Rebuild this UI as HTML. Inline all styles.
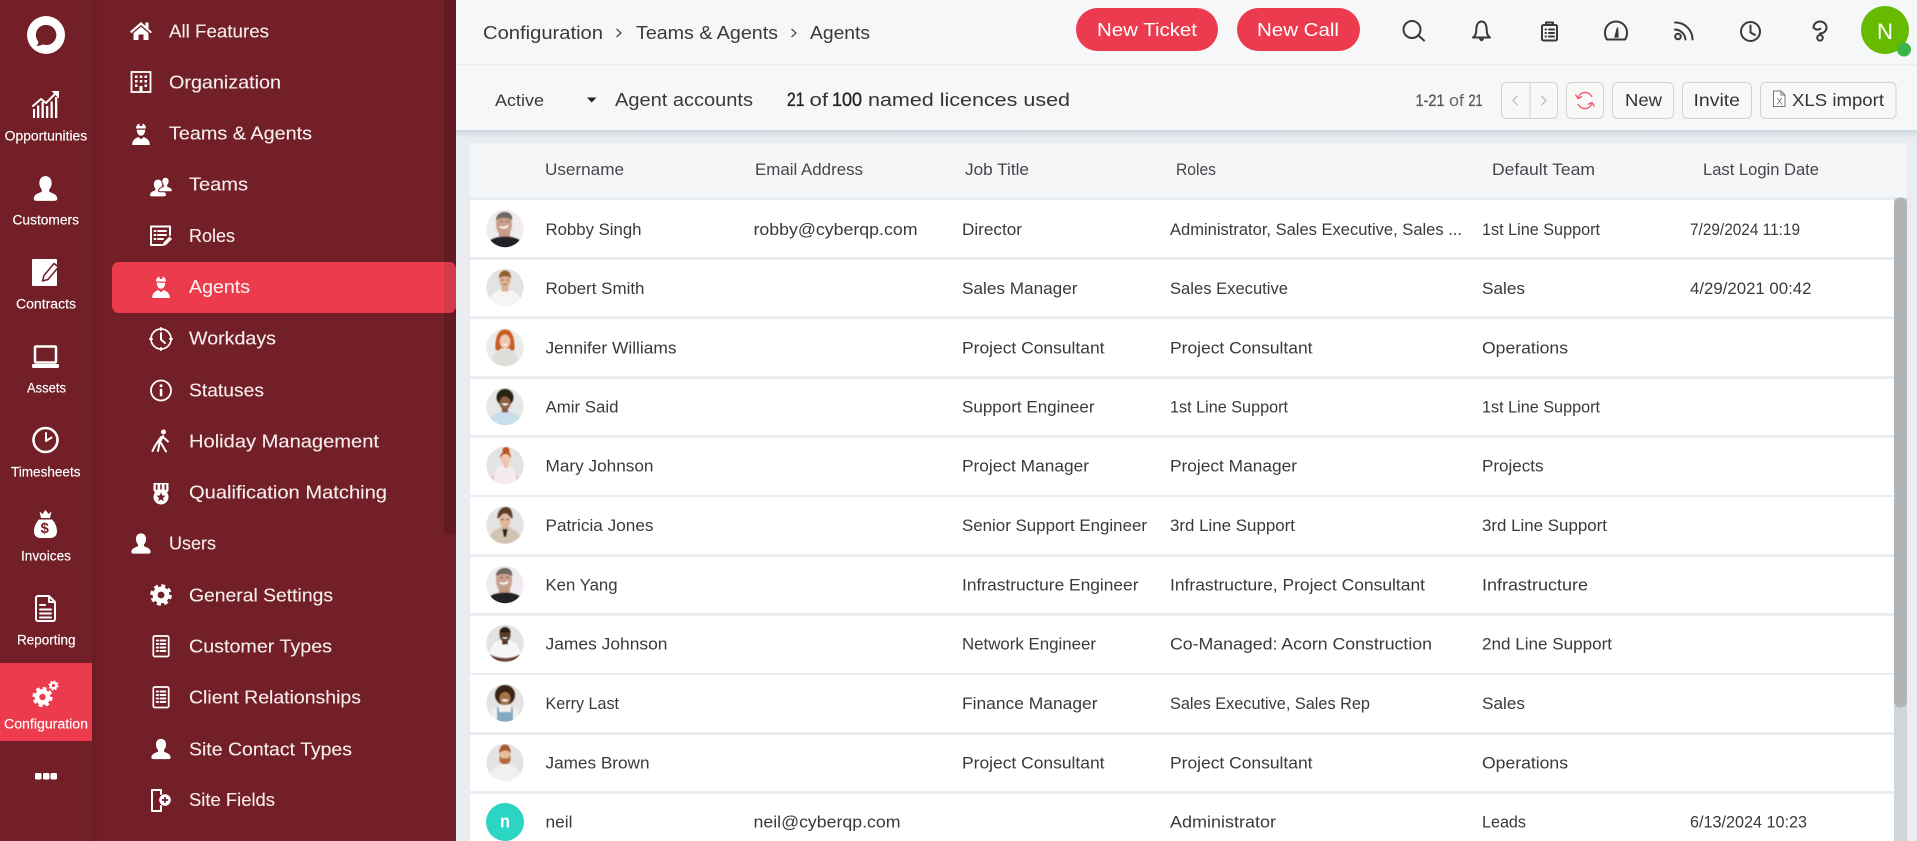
<!DOCTYPE html>
<html lang="en"><head><meta charset="utf-8"><title>Agents</title>
<style>
html,body{margin:0;padding:0;background:#e9edf2;overflow:hidden}
svg{display:block}
text{font-family:"Liberation Sans",Arial,sans-serif}
.a{font-size:13.5px;fill:#fff;stroke:#fff;stroke-width:.15}
.b{font-size:18.4px;fill:#f6eeee;stroke:#f6eeee;stroke-width:.1}
.c{font-size:18.2px;fill:#3a3a3c}
.d{font-size:16.4px;fill:#3a3a3c}
.e{font-size:16.2px;fill:#46464a}
.f{font-size:18.6px;fill:#fff}
.g{font-size:17.6px;fill:#333}
.w{fill:#fff}
.l{fill:none;stroke:#fff;stroke-width:2;stroke-linecap:round;stroke-linejoin:round}
.h{fill:none;stroke:#38393b;stroke-width:2;stroke-linecap:round;stroke-linejoin:round}
.r{fill:#fff}
.bt{fill:#f8f8f9;stroke:#d2d3d5;stroke-width:1}
</style></head>
<body>
<svg xmlns="http://www.w3.org/2000/svg" width="1917" height="841" viewBox="0 0 1917 841">
<defs>
<linearGradient id="sh" x1="0" x2="1"><stop offset="0" stop-color="#5e1820" stop-opacity=".55"/><stop offset="1" stop-color="#721f27" stop-opacity="0"/></linearGradient>
<linearGradient id="ts" x1="0" x2="0" y1="0" y2="1"><stop offset="0" stop-color="#cfd7e0"/><stop offset="1" stop-color="#e9edf2"/></linearGradient>
<clipPath id="c"><circle r="18.7"/></clipPath>
<filter id="bl" x="-20%" y="-20%" width="140%" height="140%"><feGaussianBlur stdDeviation=".45"/></filter>
<g id="person"><path class="w" d="M0-11C3.800-11 5.500-8 5.500-4.800 5.500-2.300 4.300-.3 3.300 1V2.800C5.500 4.300 10.500 4.800 10.500 9.200 10.500 10.300 9.600 11 8 11H-8C-9.600 11-10.500 10.300-10.500 9.200-10.500 4.800-5.500 4.300-3.300 2.800V1C-4.300-.3-5.500-2.300-5.500-4.800-5.500-8-3.800-11 0-11Z"/></g>
<g id="agent"><path class="w" d="M-5-5.500A5 5.500 0 0 1-1.500-10.500V-8H1.500V-10.500A5 5.500 0 0 1 5-5.500Z"/><path class="w" d="M-4.200-4.300H4.200C4.200-.6 2.200 1.700 0 1.700-2.200 1.700-4.200-.6-4.200-4.300Z"/><path class="w" d="M-8.800 11C-8.800 6-6.200 4.800-2.800 3L0 5.300 2.800 3C6.200 4.800 8.800 6 8.800 11Z"/></g>
<g id="gear"><circle r="6" fill="none" stroke="#fff" stroke-width="5"/><circle r="9.400" fill="none" stroke="#fff" stroke-width="3.200" stroke-dasharray="4 3.380"/></g>
<g id="list"><rect x="-7.700" y="-10" width="15.400" height="20.500" rx="1.500" fill="none" stroke="#fff" stroke-width="1.700"/><path class="l" stroke-width="1.600" d="M-4.200-5.500H-3M-.5-5.500H4.300M-4.200-2H-3M-.5-2H4.300M-4.200 1.500H-3M-.5 1.500H4.300M-4.200 5H-3M-.5 5H4.300"/></g>
<g id="a1" clip-path="url(#c)"><circle r="19" fill="#efebf0"/><g filter="url(#bl)"><ellipse cx="-1" cy="-4" rx="8" ry="11.500" fill="#c9a08c"/><rect x="-6" y="3" width="11" height="7" fill="#c29a86"/><path d="M-9-8C-9-15-3-16.500 0-16.500 5-16.500 8-13 7-8 5-11-5-12-9-8Z" fill="#6e6763"/><path d="M-5-2Q-1 1 3-3" stroke="#fff" stroke-width="1.600" fill="none"/><path d="M-5-7H-2M1-7H4" stroke="#6b5448" stroke-width="1.100"/><ellipse cy="18" rx="19" ry="10" fill="#232126"/></g></g>
<g id="a2" clip-path="url(#c)"><circle r="19" fill="#e3e3e3"/><g filter="url(#bl)"><path d="M-17 19C-17 8-8 3-4 2H4C8 3 17 8 17 19Z" fill="#f6f5f4"/><rect x="-3.500" y="-2" width="7" height="6" fill="#dcb095"/><ellipse cy="-8" rx="5.800" ry="8" fill="#deb397"/><path d="M-6-9C-6-15-3-17 0-17 4-17 6-14 6-9 3-12-3-12-6-9Z" fill="#92602e"/><path d="M-4-7.500H-1M1-7.500H4" stroke="#a87238" stroke-width="1.200"/><path d="M-2.500-3H2.500" stroke="#a57a5c" stroke-width="1.200"/></g></g>
<g id="a3" clip-path="url(#c)"><circle r="19" fill="#ebebe9"/><g filter="url(#bl)"><path d="M-14 19C-15 9-9 4-4 2H4C9 4 15 9 14 19Z" fill="#dfddd9"/><path d="M-9.500 2C-10-12-6-18 0-18 6-18 10-12 9.500 2 7 4 5 3 5 1L-5 1C-5 3-7 4-9.500 2Z" fill="#c95b22"/><ellipse cy="-6" rx="5.300" ry="7" fill="#f0c7ae"/><path d="M-3-3.500Q0-.5 3-3.500Z" fill="#fff"/></g></g>
<g id="a4" clip-path="url(#c)"><circle r="19" fill="#e6e7e7"/><g filter="url(#bl)"><path d="M-17 19C-17 10-9 6-4 5H4C9 6 17 10 17 19Z" fill="#c8deec"/><circle cy="-9" r="8.500" fill="#2a2019"/><rect x="-3" y="-1" width="6" height="7" fill="#84583c"/><ellipse cy="-3.500" rx="5.500" ry="6.500" fill="#8c6042"/><path d="M-3.500-3Q0 1 3.500-3Z" fill="#fff"/></g></g>
<g id="a5" clip-path="url(#c)"><circle r="19" fill="#e3e3e3"/><g filter="url(#bl)"><path d="M-17 19L-12 9-10 19ZM17 19L12 9 10 19Z" fill="#e8c4ae"/><path d="M-11 19C-12 7-8 1-4 0H4C8 1 12 7 11 19Z" fill="#f4ecee"/><circle cx="1" cy="-15" r="3.500" fill="#c0501f"/><path d="M-5-7C-5-13-1-14 1-14 4-14 6-12 6-7L4-10H-3Z" fill="#c0501f"/><rect x="-1.500" y="-3" width="5" height="5" fill="#eec0a8"/><ellipse cx=".5" cy="-6" rx="4.800" ry="5.500" fill="#f2c6ae"/></g></g>
<g id="a6" clip-path="url(#c)"><circle r="19" fill="#e4e4e4"/><g filter="url(#bl)"><path d="M-17 19C-17 9-9 4-4 2H4C9 4 17 9 17 19Z" fill="#d2c3b3"/><path d="M-3 3H3L1 12H-1Z" fill="#26201e"/><path d="M-7.500-6C-8-14-3-18 1-18 5-18 8-14 7.500-6L4-9H-4Z" fill="#5c3c2a"/><ellipse cy="-4.500" rx="5.500" ry="7" fill="#e2b79c"/><rect x="-3" y="0" width="6" height="4" fill="#dcae92"/><path d="M-4.500-5.500H-1M1-5.500H4.500" stroke="#4a3a30" stroke-width="1.100"/></g></g>
<g id="a8" clip-path="url(#c)"><circle r="19" fill="#e3e3e3"/><g filter="url(#bl)"><path d="M-16 9L-11-1-5-3H5L11-1 16 9 13 15-13 15Z" fill="#f6f6f6"/><path d="M-15 11Q0 18 15 11L15 15Q0 21-15 15Z" fill="#6b4532"/><rect x="-3" y="-5" width="6" height="6" fill="#4c3223"/><ellipse cy="-9" rx="5.500" ry="7.500" fill="#5a3a28"/><path d="M-5.500-11C-5.500-18 5.500-18 5.500-11Z" fill="#2c1d14"/><path d="M-3-6Q0-3.500 3-6Z" fill="#fff"/></g></g>
<g id="a9" clip-path="url(#c)"><circle r="19" fill="#e3e3e3"/><g filter="url(#bl)"><path d="M-15 17L-13 6-4 2H4L13 6 15 17Z" fill="#f2f0ed"/><path d="M-8 19V4H-6V9H6V4H8V19Z" fill="#84a8bf"/><circle cy="-8" r="10" fill="#3a2414"/><ellipse cy="-4.500" rx="5.500" ry="6.500" fill="#a8744c"/><path d="M-3.500-3.500Q0 .5 3.500-3.500Z" fill="#fff"/></g></g>
<g id="a10" clip-path="url(#c)"><circle r="19" fill="#e4e4e4"/><g filter="url(#bl)"><path d="M-18 19C-16 8-8 3-4 2H4C8 3 16 8 18 19Z" fill="#f1f0ef"/><ellipse cy="-8" rx="5.500" ry="7" fill="#e4bea0"/><path d="M-5.500-7V-3C-5.500 1-2 1.500 0 1.500 2 1.500 5.500 1-3-3 5.500-7 3-4-3-4Z" fill="#b8683a"/><path d="M-5.700-9C-6-15-3-18 0-18 3-18 6-15 5.700-9 3-13-3-13-5.700-9Z" fill="#a85a2e"/><path d="M-5.500-7V-3C-5.500 1-2 1.500 0 1.500 2 1.500 5.500 1 5.500-3V-7L3-4H-3Z" fill="#b8683a"/></g></g>
</defs>

<!-- page -->
<rect width="1917" height="841" fill="#e9edf2"/>
<rect x="456" y="0" width="1461" height="130" fill="#f6f7f9"/>
<rect x="456" y="64" width="1461" height="1.500" fill="#e9ecf0"/>
<rect x="456" y="130" width="1461" height="8" fill="url(#ts)"/>

<!-- sidebars -->
<rect width="456" height="841" fill="#721f27"/>
<rect x="92" width="10" height="841" fill="url(#sh)"/>
<rect x="444" width="12" height="534" fill="#641a22"/>
<rect x="112" y="262" width="344" height="51" rx="7" fill="#ec3b4c"/>
<path d="M444 262H449A7 7 0 0 1 456 269V306A7 7 0 0 1 449 313H444Z" fill="#d43a48"/>
<rect y="663" width="92" height="78" fill="#ec3b4c"/>

<!-- logo -->
<circle cx="46" cy="35" r="19" fill="#fff"/>
<path d="M47 25A10 10 0 1 1 43 44.400C41 45.400 38.500 46 36.500 45.800 37.800 44.700 38.300 43.300 38.300 41.500A10 10 0 0 1 47 25Z" fill="#721f27"/>

<!-- rail icons -->
<path class="w" d="M33 109h2v9h-2zM37 105.500h2.300V118H37zM41.500 102h2.300v16h-2.300zM46 106h2.300v12H46zM50.500 101.500h2.300V118h-2.300zM55 97h2.300v21H55z"/>
<path class="l" stroke-width="1.800" d="M33 106L41 99 46 103 55 94"/><path class="w" d="M51.500 91H59V98.500Z"/>
<use href="#person" transform="translate(45.500 188.500) scale(1.120)"/>
<rect x="32" y="259" width="25" height="27" rx="1" fill="#fff"/>
<path d="M42.500 281L44 275.500 54 263.500 58.500 267 48 279.500Z" fill="#fff" stroke="#721f27" stroke-width="1.500" stroke-linejoin="round"/>
<rect x="35" y="346.500" width="21" height="16" rx="1" fill="none" stroke="#fff" stroke-width="2.500"/><rect x="32" y="364" width="27" height="4" rx="1.500" class="w"/>
<circle cx="45.500" cy="440" r="12" fill="none" stroke="#fff" stroke-width="2.600"/><path class="l" stroke-width="2.300" d="M46 433V441L51.500 437.500"/>
<path class="w" d="M39.500 511.500L42.500 514 45.500 510 48.500 514 51.500 511.500 50 518H41ZM39 519.500H52C57 524 61 538 50 538H41C30 538 34 524 39 519.500Z"/>
<text x="40.500" y="533" font-size="15" font-weight="bold" fill="#721f27">$</text>
<path class="l" stroke-width="2.200" d="M49 596H38A2 2 0 0 0 36 598V619A2 2 0 0 0 38 621H53A2 2 0 0 0 55 619V602ZM49 596V602H55"/><path class="l" stroke-width="1.700" d="M40 605H45M40 609.500H51M40 613.500H51M40 617.500H51"/>
<use href="#gear" transform="translate(42.500 697) scale(.92)"/>
<use href="#gear" transform="translate(53.500 685.500) scale(.46)"/>
<rect x="35" y="773" width="6.500" height="6.500" rx="1.500" class="w"/><rect x="43" y="773" width="6.500" height="6.500" rx="1.500" class="w"/><rect x="50.500" y="773" width="6.500" height="6.500" rx="1.500" class="w"/>

<!-- rail labels -->
<text class="a" x="4.700" y="140.500" textLength="82.500" lengthAdjust="spacingAndGlyphs">Opportunities</text>
<text class="a" x="12.500" y="224.500" textLength="66.500" lengthAdjust="spacingAndGlyphs">Customers</text>
<text class="a" x="16" y="308.500" textLength="60" lengthAdjust="spacingAndGlyphs">Contracts</text>
<text class="a" x="27" y="392.500" textLength="39" lengthAdjust="spacingAndGlyphs">Assets</text>
<text class="a" x="11" y="476.500" textLength="69.500" lengthAdjust="spacingAndGlyphs">Timesheets</text>
<text class="a" x="21" y="560.500" textLength="50" lengthAdjust="spacingAndGlyphs">Invoices</text>
<text class="a" x="17" y="644.500" textLength="58.500" lengthAdjust="spacingAndGlyphs">Reporting</text>
<text class="a" x="4" y="728.500" textLength="84" lengthAdjust="spacingAndGlyphs">Configuration</text>

<!-- panel icons -->
<path class="w" d="M130 31.500L141 22 145.500 26V22.500H148.500V29L152 32 150.800 33.200 141 25 131.300 33.200ZM133.500 33L141 26.800 148.500 33V40H143.500V34.500H138.500V40H133.500Z"/>
<rect x="131.500" y="72" width="19" height="20" fill="none" stroke="#fff" stroke-width="1.800"/><path d="M135 75.500h2.500v2.500H135zM139.800 75.500h2.500v2.500h-2.500zM144.500 75.500h2.500v2.500h-2.500zM135 80h2.500v2.500H135zM139.800 80h2.500v2.500h-2.500zM144.500 80h2.500v2.500h-2.500zM135 84.500h2.500V87H135zM144.500 84.500h2.500V87h-2.500zM139.500 86h3v5h-3z" class="w"/>
<use href="#agent" x="141" y="134"/>
<use href="#person" transform="translate(158 188) scale(.76)"/><g transform="translate(165.500 184.500) scale(.66)"><path class="w" stroke="#721f27" stroke-width="1.500" d="M0-11C3.800-11 5.500-8 5.500-4.800 5.500-2.300 4.300-.3 3.300 1V2.800C5.500 4.300 10.500 4.800 10.500 9.200 10.500 10.300 9.600 11 8 11H-8C-9.600 11-10.500 10.300-10.500 9.200-10.500 4.800-5.500 4.300-3.300 2.800V1C-4.300-.3-5.500-2.300-5.500-4.800-5.500-8-3.800-11 0-11Z"/></g>
<path class="l" stroke-width="1.800" d="M170 235V226.500H151V245H162"/><path class="l" stroke-width="1.500" d="M154.500 231H155.500M158 231H166M154.500 235H155.500M158 235H166M154.500 239H155.500M158 239H163"/><path class="w" d="M162.500 246L163.500 242.500 169.500 236.500 172 239 166 245Z"/>
<use href="#agent" x="161" y="287"/>
<circle cx="161" cy="339" r="10" fill="none" stroke="#fff" stroke-width="1.700"/><path class="l" stroke-width="1.500" d="M161 333V339.500L165 343"/><path class="l" stroke-width="2.400" d="M161 328V330M161 348V350M150 339H152M170 339H172"/>
<circle cx="161" cy="390.500" r="10" fill="none" stroke="#fff" stroke-width="1.800"/><circle cx="161" cy="385.800" r="1.500" class="w"/><rect x="159.800" y="388.800" width="2.500" height="7.500" class="w"/>
<circle cx="163.500" cy="432" r="2.500" class="w"/><path class="l" stroke-width="2.300" d="M163 436L159.500 443 158 451M161 443L166 451.500M163 437L168 441.500M161 437L155 446 152.500 451"/>
<path class="w" d="M153.500 483H168.500V490C168.500 491.500 167 492.500 166 493H156C155 492.500 153.500 491.500 153.500 490ZM155.800 484.500V489.800H157.500V484.500ZM160.200 484.500V489.800H161.800V484.500ZM164.500 484.500V489.800H166.200V484.500Z"/><circle cx="161" cy="497" r="7.500" class="w"/><path d="M161 492.500L162.300 495.500 165.500 495.800 163 498 163.800 501.200 161 499.500 158.200 501.200 159 498 156.500 495.800 159.700 495.500Z" fill="#721f27"/>
<use href="#person" transform="translate(141 543.500) scale(.92)"/>
<use href="#gear" transform="translate(161 595) scale(.98)"/>
<use href="#list" x="161" y="646"/>
<use href="#list" x="161" y="697"/>
<use href="#person" transform="translate(161 749) scale(.92)"/>
<path class="l" stroke-width="1.500" d="M161 790H152V811H161"/><path class="l" stroke-width="1.500" d="M161 790V794M161 806V811"/><circle cx="165" cy="800" r="5.800" class="w"/><path d="M165 797V803M162 800H168" stroke="#721f27" stroke-width="1.700"/>

<!-- panel labels -->
<text class="b" x="169" y="37.500" textLength="100" lengthAdjust="spacingAndGlyphs">All Features</text>
<text class="b" x="169" y="88.500" textLength="112" lengthAdjust="spacingAndGlyphs">Organization</text>
<text class="b" x="169" y="139.500" textLength="143" lengthAdjust="spacingAndGlyphs">Teams &amp; Agents</text>
<text class="b" x="189" y="190.500" textLength="59" lengthAdjust="spacingAndGlyphs">Teams</text>
<text class="b" x="189" y="242" textLength="46" lengthAdjust="spacingAndGlyphs">Roles</text>
<text class="b" x="189" y="293" textLength="61" lengthAdjust="spacingAndGlyphs">Agents</text>
<text class="b" x="189" y="344.500" textLength="87" lengthAdjust="spacingAndGlyphs">Workdays</text>
<text class="b" x="189" y="396.500" textLength="75" lengthAdjust="spacingAndGlyphs">Statuses</text>
<text class="b" x="189" y="447.500" textLength="190" lengthAdjust="spacingAndGlyphs">Holiday Management</text>
<text class="b" x="189" y="498.500" textLength="198" lengthAdjust="spacingAndGlyphs">Qualification Matching</text>
<text class="b" x="169" y="549.500" textLength="47" lengthAdjust="spacingAndGlyphs">Users</text>
<text class="b" x="189" y="601.500" textLength="144" lengthAdjust="spacingAndGlyphs">General Settings</text>
<text class="b" x="189" y="652.500" textLength="143" lengthAdjust="spacingAndGlyphs">Customer Types</text>
<text class="b" x="189" y="703.500" textLength="172" lengthAdjust="spacingAndGlyphs">Client Relationships</text>
<text class="b" x="189" y="755.500" textLength="163" lengthAdjust="spacingAndGlyphs">Site Contact Types</text>
<text class="b" x="189" y="806" textLength="86" lengthAdjust="spacingAndGlyphs">Site Fields</text>

<!-- breadcrumb -->
<text class="c" x="483" y="39" textLength="120" lengthAdjust="spacingAndGlyphs">Configuration</text>
<path d="M616.500 29L621 33 616.500 37" fill="none" stroke="#444" stroke-width="1.200"/>
<text class="c" x="636" y="39" textLength="142" lengthAdjust="spacingAndGlyphs">Teams &amp; Agents</text>
<path d="M791.500 29L796 33 791.500 37" fill="none" stroke="#444" stroke-width="1.200"/>
<text class="c" x="810" y="39" textLength="60" lengthAdjust="spacingAndGlyphs">Agents</text>

<!-- top buttons -->
<rect x="1076" y="8" width="142" height="43" rx="21.500" fill="#ec3b4e"/>
<rect x="1237" y="8" width="123" height="43" rx="21.500" fill="#ec3b4e"/>
<text class="f" x="1097" y="36" textLength="100" lengthAdjust="spacingAndGlyphs">New Ticket</text>
<text class="f" x="1257" y="36" textLength="82" lengthAdjust="spacingAndGlyphs">New Call</text>

<!-- top icons -->
<circle cx="1412" cy="29.500" r="8.500" class="h"/><path class="h" stroke-width="2.200" d="M1418.500 35.500L1424 40.500"/>
<path class="h" d="M1473 37.500C1477 35 1476 30 1476.500 27.500 1477 23 1479.500 21.500 1481.500 21.500 1483.500 21.500 1486 23 1486.500 27.500 1487 30 1486 35 1490 37.500ZM1480 38.500Q1481.500 42 1483 38.500"/>
<rect x="1542" y="25" width="15" height="15.500" rx="1.500" class="h"/><path class="h" d="M1546 24.500V22.500H1553V24.500"/><path class="h" stroke-width="1.600" d="M1545.500 29.500H1546M1549 29.500H1554M1545.500 33H1546M1549 33H1554M1545.500 36.500H1546M1549 36.500H1554"/>
<path class="h" d="M1607 39.500A11 11 0 0 1 1605 32.500 11 11 0 0 1 1627 32.500 11 11 0 0 1 1625 39.500Z"/><path d="M1615 37L1617.500 27.500 1618 37Z" fill="#38393b" stroke="#38393b" stroke-width="1.300"/>
<circle cx="1678" cy="36.500" r="2.800" class="h"/><path class="h" d="M1675 29.500A11 11 0 0 1 1685.500 39.500M1675 22.500A17 17 0 0 1 1692.500 39.500"/>
<circle cx="1750.500" cy="31.500" r="9.500" class="h"/><path class="h" d="M1750.500 25.500V32.500L1755 35"/>
<path class="h" d="M1813.500 27.500A6.500 6 0 1 1 1820 33.500"/><path class="h" stroke-width="1.800" d="M1813.500 27.500Q1816.500 31 1820.500 28.800"/><circle cx="1820" cy="37.800" r="2.800" class="h"/>
<circle cx="1885" cy="30" r="24" fill="#66bb00"/>
<text x="1877" y="39" font-size="22" fill="#fff" textLength="16" lengthAdjust="spacingAndGlyphs">N</text>
<circle cx="1904" cy="49.500" r="7" fill="#3ab54a"/>

<!-- toolbar -->
<text class="c" x="495" y="106" style="font-size:17px" textLength="49" lengthAdjust="spacingAndGlyphs">Active</text>
<path d="M587 97.500H596.500L591.700 102.500Z" fill="#222"/>
<text class="c" x="615" y="106" textLength="138" lengthAdjust="spacingAndGlyphs">Agent accounts</text>
<text x="787" y="106" font-size="19" fill="#222" stroke="#222" stroke-width=".35" textLength="17.500" lengthAdjust="spacingAndGlyphs">21</text>
<text x="809.500" y="106" font-size="18.800" fill="#333" textLength="18.500" lengthAdjust="spacingAndGlyphs">of</text>
<text x="832" y="106" font-size="19" fill="#222" stroke="#222" stroke-width=".35" textLength="30" lengthAdjust="spacingAndGlyphs">100</text>
<text x="868" y="106" font-size="18.800" fill="#333" textLength="202" lengthAdjust="spacingAndGlyphs">named licences used</text>
<text x="1415.500" y="106" font-size="17" fill="#55565a" stroke="#55565a" stroke-width=".35" textLength="29" lengthAdjust="spacingAndGlyphs">1-21</text>
<text x="1449" y="106" font-size="17" fill="#66676b" textLength="15" lengthAdjust="spacingAndGlyphs">of</text>
<text x="1468.500" y="106" font-size="17" fill="#55565a" stroke="#55565a" stroke-width=".35" textLength="14" lengthAdjust="spacingAndGlyphs">21</text>
<rect class="bt" x="1501.500" y="82.500" width="56" height="36" rx="5"/><path d="M1530 82.500V118.500" stroke="#d2d3d5"/>
<path d="M1517.500 96L1513 100.500 1517.500 105M1541.500 96L1546 100.500 1541.500 105" fill="none" stroke="#b5b6ba" stroke-width="1.200"/>
<rect class="bt" x="1566.500" y="82.500" width="37" height="36" rx="5"/>
<path d="M1578 97.500A7.500 7.500 0 0 1 1592 97M1592 103.500A7.500 7.500 0 0 1 1578 104" fill="none" stroke="#ee5565" stroke-width="1.300"/><path d="M1575.500 94.500L1578 98.500 1582 96.500M1594.500 106.500L1592 102.500 1588 104.500" fill="none" stroke="#ee5565" stroke-width="1.300"/>
<rect class="bt" x="1612.500" y="82.500" width="61" height="36" rx="5"/>
<rect class="bt" x="1682.500" y="82.500" width="69" height="36" rx="5"/>
<rect class="bt" x="1760.500" y="82.500" width="135.500" height="36" rx="5"/>
<text class="g" x="1625" y="106" textLength="37" lengthAdjust="spacingAndGlyphs">New</text>
<text class="g" x="1693.500" y="106" textLength="46.500" lengthAdjust="spacingAndGlyphs">Invite</text>
<path d="M1773.500 91H1781L1785 95V106.500H1773.500ZM1781 91V95H1785" fill="#fff" stroke="#777" stroke-width="1"/>
<text x="1776.500" y="104.500" font-size="9" fill="#666">X</text>
<text class="g" x="1792" y="106" textLength="92" lengthAdjust="spacingAndGlyphs">XLS import</text>

<!-- table -->
<rect x="470" y="143" width="1437" height="54" fill="#f5f6f8"/>
<g class="r">
<rect x="470" y="200" width="1424" height="57"/><rect x="470" y="260" width="1424" height="56.500"/><rect x="470" y="319" width="1424" height="57"/><rect x="470" y="379" width="1424" height="56"/><rect x="470" y="438" width="1424" height="57"/><rect x="470" y="497" width="1424" height="57"/><rect x="470" y="557" width="1424" height="56"/><rect x="470" y="616" width="1424" height="57"/><rect x="470" y="675" width="1424" height="57"/><rect x="470" y="735" width="1424" height="56"/><rect x="470" y="794" width="1424" height="47"/>
</g>
<rect x="1894" y="198" width="13" height="643" fill="#d0d5d9"/>
<path d="M1894 204A6.500 6.500 0 0 1 1907 204V701A6.500 6.500 0 0 1 1894 701Z" fill="#b0b4b7"/>

<text class="e" x="545" y="175" textLength="79" lengthAdjust="spacingAndGlyphs">Username</text>
<text class="e" x="755" y="175" textLength="108" lengthAdjust="spacingAndGlyphs">Email Address</text>
<text class="e" x="965" y="175" textLength="64" lengthAdjust="spacingAndGlyphs">Job Title</text>
<text class="e" x="1176" y="175" textLength="40" lengthAdjust="spacingAndGlyphs">Roles</text>
<text class="e" x="1492" y="175" textLength="103" lengthAdjust="spacingAndGlyphs">Default Team</text>
<text class="e" x="1703" y="175" textLength="116" lengthAdjust="spacingAndGlyphs">Last Login Date</text>

<!-- avatars -->
<use href="#a1" x="505" y="228.500"/>
<use href="#a2" x="505" y="287.500"/>
<use href="#a3" x="505" y="347.500"/>
<use href="#a4" x="505" y="406.500"/>
<use href="#a5" x="505" y="465.500"/>
<use href="#a6" x="505" y="525"/>
<use href="#a1" x="505" y="584.500"/>
<use href="#a8" x="505" y="643.500"/>
<use href="#a9" x="505" y="703"/>
<use href="#a10" x="505" y="762.500"/>
<circle cx="505" cy="822" r="19" fill="#2bd4c3"/>
<text x="500" y="827.500" font-size="18" font-weight="bold" fill="#fff" textLength="10" lengthAdjust="spacingAndGlyphs">n</text>

<!-- row 1 -->
<text class="d" x="545.500" y="235" textLength="96" lengthAdjust="spacingAndGlyphs">Robby Singh</text>
<text class="d" x="753.500" y="235" textLength="164" lengthAdjust="spacingAndGlyphs">robby@cyberqp.com</text>
<text class="d" x="962" y="235" textLength="60" lengthAdjust="spacingAndGlyphs">Director</text>
<text class="d" x="1170" y="235" textLength="292" lengthAdjust="spacingAndGlyphs">Administrator, Sales Executive, Sales ...</text>
<text class="d" x="1482" y="235" textLength="118" lengthAdjust="spacingAndGlyphs">1st Line Support</text>
<text class="d" x="1690" y="235" textLength="110" lengthAdjust="spacingAndGlyphs">7/29/2024 11:19</text>
<!-- row 2 -->
<text class="d" x="545.500" y="294" textLength="99" lengthAdjust="spacingAndGlyphs">Robert Smith</text>
<text class="d" x="962" y="294" textLength="115.500" lengthAdjust="spacingAndGlyphs">Sales Manager</text>
<text class="d" x="1170" y="294" textLength="118" lengthAdjust="spacingAndGlyphs">Sales Executive</text>
<text class="d" x="1482" y="294" textLength="43" lengthAdjust="spacingAndGlyphs">Sales</text>
<text class="d" x="1690" y="294" textLength="121.500" lengthAdjust="spacingAndGlyphs">4/29/2021 00:42</text>
<!-- row 3 -->
<text class="d" x="545.500" y="353.500" textLength="131" lengthAdjust="spacingAndGlyphs">Jennifer Williams</text>
<text class="d" x="962" y="353.500" textLength="142.500" lengthAdjust="spacingAndGlyphs">Project Consultant</text>
<text class="d" x="1170" y="353.500" textLength="142.500" lengthAdjust="spacingAndGlyphs">Project Consultant</text>
<text class="d" x="1482" y="353.500" textLength="86" lengthAdjust="spacingAndGlyphs">Operations</text>
<!-- row 4 -->
<text class="d" x="545.500" y="412.500" textLength="73" lengthAdjust="spacingAndGlyphs">Amir Said</text>
<text class="d" x="962" y="412.500" textLength="132.500" lengthAdjust="spacingAndGlyphs">Support Engineer</text>
<text class="d" x="1170" y="412.500" textLength="118" lengthAdjust="spacingAndGlyphs">1st Line Support</text>
<text class="d" x="1482" y="412.500" textLength="118" lengthAdjust="spacingAndGlyphs">1st Line Support</text>
<!-- row 5 -->
<text class="d" x="545.500" y="471.500" textLength="108" lengthAdjust="spacingAndGlyphs">Mary Johnson</text>
<text class="d" x="962" y="471.500" textLength="127" lengthAdjust="spacingAndGlyphs">Project Manager</text>
<text class="d" x="1170" y="471.500" textLength="127" lengthAdjust="spacingAndGlyphs">Project Manager</text>
<text class="d" x="1482" y="471.500" textLength="61.500" lengthAdjust="spacingAndGlyphs">Projects</text>
<!-- row 6 -->
<text class="d" x="545.500" y="531" textLength="108" lengthAdjust="spacingAndGlyphs">Patricia Jones</text>
<text class="d" x="962" y="531" textLength="185" lengthAdjust="spacingAndGlyphs">Senior Support Engineer</text>
<text class="d" x="1170" y="531" textLength="125" lengthAdjust="spacingAndGlyphs">3rd Line Support</text>
<text class="d" x="1482" y="531" textLength="125" lengthAdjust="spacingAndGlyphs">3rd Line Support</text>
<!-- row 7 -->
<text class="d" x="545.500" y="590.500" textLength="72" lengthAdjust="spacingAndGlyphs">Ken Yang</text>
<text class="d" x="962" y="590.500" textLength="176.500" lengthAdjust="spacingAndGlyphs">Infrastructure Engineer</text>
<text class="d" x="1170" y="590.500" textLength="255" lengthAdjust="spacingAndGlyphs">Infrastructure, Project Consultant</text>
<text class="d" x="1482" y="590.500" textLength="106" lengthAdjust="spacingAndGlyphs">Infrastructure</text>
<!-- row 8 -->
<text class="d" x="545.500" y="649.500" textLength="122" lengthAdjust="spacingAndGlyphs">James Johnson</text>
<text class="d" x="962" y="649.500" textLength="134" lengthAdjust="spacingAndGlyphs">Network Engineer</text>
<text class="d" x="1170" y="649.500" textLength="262" lengthAdjust="spacingAndGlyphs">Co-Managed: Acorn Construction</text>
<text class="d" x="1482" y="649.500" textLength="130" lengthAdjust="spacingAndGlyphs">2nd Line Support</text>
<!-- row 9 -->
<text class="d" x="545.500" y="709" textLength="73.500" lengthAdjust="spacingAndGlyphs">Kerry Last</text>
<text class="d" x="962" y="709" textLength="135.500" lengthAdjust="spacingAndGlyphs">Finance Manager</text>
<text class="d" x="1170" y="709" textLength="200" lengthAdjust="spacingAndGlyphs">Sales Executive, Sales Rep</text>
<text class="d" x="1482" y="709" textLength="43" lengthAdjust="spacingAndGlyphs">Sales</text>
<!-- row 10 -->
<text class="d" x="545.500" y="768.500" textLength="104" lengthAdjust="spacingAndGlyphs">James Brown</text>
<text class="d" x="962" y="768.500" textLength="142.500" lengthAdjust="spacingAndGlyphs">Project Consultant</text>
<text class="d" x="1170" y="768.500" textLength="142.500" lengthAdjust="spacingAndGlyphs">Project Consultant</text>
<text class="d" x="1482" y="768.500" textLength="86" lengthAdjust="spacingAndGlyphs">Operations</text>
<!-- row 11 -->
<text class="d" x="545.500" y="827.500" textLength="27" lengthAdjust="spacingAndGlyphs">neil</text>
<text class="d" x="753.500" y="827.500" textLength="147" lengthAdjust="spacingAndGlyphs">neil@cyberqp.com</text>
<text class="d" x="1170" y="827.500" textLength="106" lengthAdjust="spacingAndGlyphs">Administrator</text>
<text class="d" x="1482" y="827.500" textLength="44" lengthAdjust="spacingAndGlyphs">Leads</text>
<text class="d" x="1690" y="827.500" textLength="117" lengthAdjust="spacingAndGlyphs">6/13/2024 10:23</text>
</svg>
</body></html>
